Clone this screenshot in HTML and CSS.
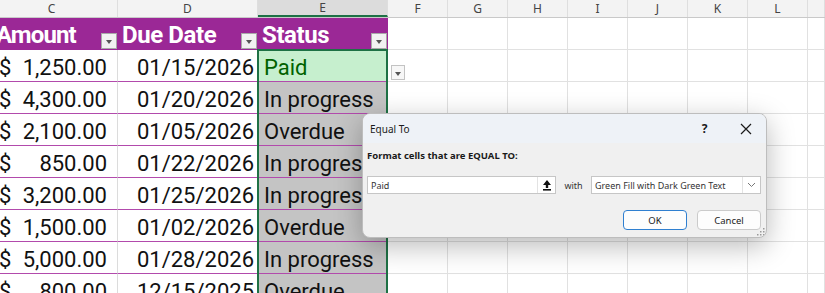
FILE: index.html
```html
<!DOCTYPE html>
<html>
<head>
  <link rel="stylesheet" href="styles.css">
  <title>Invoices - Conditional Formatting</title>
</head>
<body>
  <div class="view">
    <div class="sheet">
      <div class="row letters">
        <div class="cl">C</div><div class="cl">D</div><div class="cl sel">E</div>
        <div class="cl">F</div><div class="cl">G</div><div class="cl">H</div><div class="cl">I</div>
        <div class="cl">J</div><div class="cl">K</div><div class="cl">L</div><div class="cl"></div>
      </div>

      <div class="row">
        <div class="th first"><span>Amount</span><i class="filter"></i></div>
        <div class="th"><span>Due Date</span><i class="filter"></i></div>
        <div class="th"><span>Status</span><i class="filter"></i></div>
        <div class="g"></div><div class="g"></div><div class="g"></div><div class="g"></div>
        <div class="g"></div><div class="g"></div><div class="g"></div><div class="g"></div>
      </div>

      <div class="row">
        <div class="amt"><span>$</span><span>1,250.00</span></div>
        <div class="date">01/15/2026</div>
        <div class="st paid">Paid</div>
        <div class="g"></div><div class="g"></div><div class="g"></div><div class="g"></div>
        <div class="g"></div><div class="g"></div><div class="g"></div><div class="g"></div>
      </div>

      <div class="row">
        <div class="amt"><span>$</span><span>4,300.00</span></div>
        <div class="date">01/20/2026</div>
        <div class="st">In progress</div>
        <div class="g"></div><div class="g"></div><div class="g"></div><div class="g"></div>
        <div class="g"></div><div class="g"></div><div class="g"></div><div class="g"></div>
      </div>

      <div class="row">
        <div class="amt"><span>$</span><span>2,100.00</span></div>
        <div class="date">01/05/2026</div>
        <div class="st">Overdue</div>
        <div class="g"></div><div class="g"></div><div class="g"></div><div class="g"></div>
        <div class="g"></div><div class="g"></div><div class="g"></div><div class="g"></div>
      </div>

      <div class="row">
        <div class="amt"><span>$</span><span>850.00</span></div>
        <div class="date">01/22/2026</div>
        <div class="st">In progress</div>
        <div class="g"></div><div class="g"></div><div class="g"></div><div class="g"></div>
        <div class="g"></div><div class="g"></div><div class="g"></div><div class="g"></div>
      </div>

      <div class="row">
        <div class="amt"><span>$</span><span>3,200.00</span></div>
        <div class="date">01/25/2026</div>
        <div class="st">In progress</div>
        <div class="g"></div><div class="g"></div><div class="g"></div><div class="g"></div>
        <div class="g"></div><div class="g"></div><div class="g"></div><div class="g"></div>
      </div>

      <div class="row">
        <div class="amt"><span>$</span><span>1,500.00</span></div>
        <div class="date">01/02/2026</div>
        <div class="st">Overdue</div>
        <div class="g"></div><div class="g"></div><div class="g"></div><div class="g"></div>
        <div class="g"></div><div class="g"></div><div class="g"></div><div class="g"></div>
      </div>

      <div class="row">
        <div class="amt"><span>$</span><span>5,000.00</span></div>
        <div class="date">01/28/2026</div>
        <div class="st">In progress</div>
        <div class="g"></div><div class="g"></div><div class="g"></div><div class="g"></div>
        <div class="g"></div><div class="g"></div><div class="g"></div><div class="g"></div>
      </div>

      <div class="row">
        <div class="amt"><span>$</span><span>800.00</span></div>
        <div class="date">12/15/2025</div>
        <div class="st">Overdue</div>
        <div class="g"></div><div class="g"></div><div class="g"></div><div class="g"></div>
        <div class="g"></div><div class="g"></div><div class="g"></div><div class="g"></div>
      </div>
    </div>

    <!-- selected range E3:E10 -->
    <div class="selection"></div>
    <i class="filter stray"></i>

    <div class="dialog">
      <div class="dlg-title">
        <span class="dlg-name">Equal To</span>
        <span class="tbtn">?</span>
        <span class="tbtn close">
          <svg width="12" height="12" viewBox="0 0 12 12"><path d="M1 1L11 11M11 1L1 11" stroke="#1a1a1a" stroke-width="1.2" fill="none"/></svg>
        </span>
      </div>
      <div class="dlg-body">
        <div class="dlg-label">Format cells that are EQUAL TO:</div>
        <div class="dlg-row">
          <div class="field">
            <span class="field-text">Paid</span>
            <span class="ref-btn">
              <svg width="10" height="12" viewBox="0 0 10 12"><path d="M5 1L9 6H6.2V9H3.8V6H1Z" fill="#111"/><rect x="1" y="10" width="8" height="1.6" fill="#111"/></svg>
            </span>
          </div>
          <span class="with">with</span>
          <div class="combo">
            <span class="field-text">Green Fill with Dark Green Text</span>
            <span class="chev">
              <svg width="9" height="6" viewBox="0 0 9 6"><path d="M1 1L4.5 4.5L8 1" stroke="#777" stroke-width="1" fill="none"/></svg>
            </span>
          </div>
        </div>
        <div class="dlg-btns">
          <button type="button" class="btn primary">OK</button>
          <button type="button" class="btn">Cancel</button>
        </div>
      </div>
      <svg class="grip" width="9" height="9" viewBox="0 0 9 9">
        <rect x="7" y="1" width="1.5" height="1.5" fill="#9a9a9a"/>
        <rect x="4" y="4" width="1.5" height="1.5" fill="#9a9a9a"/>
        <rect x="7" y="4" width="1.5" height="1.5" fill="#9a9a9a"/>
        <rect x="1" y="7" width="1.5" height="1.5" fill="#9a9a9a"/>
        <rect x="4" y="7" width="1.5" height="1.5" fill="#9a9a9a"/>
        <rect x="7" y="7" width="1.5" height="1.5" fill="#9a9a9a"/>
      </svg>
    </div>
  </div>
</body>
</html>
```

FILE: styles.css
```css
:root {
  --purple: #9b2896;
  --rowline: #b24aac;
  --grid: #e1e1e1;
  --sel: #1e7145;
  --status-gray: #c4c4c4;
}

body {
  margin: 0;
  background: #fff;
  font-family: Roboto, "Liberation Sans", sans-serif;
}

.view {
  position: relative;
  width: 825px;
  height: 293px;
  overflow: hidden;
}

/* sheet is scrolled a little to the right, so column C is cut on the left */
.sheet {
  margin-left: -14px;
}

.row {
  display: grid;
  grid-template-columns: 132px 140px 130px repeat(7, 60px) 1fr;
  height: 32px;
}

/* column letters */
.letters {
  height: 18px;
  background: #f3f3f3;
  border-bottom: 1px solid #c9c9c9;
  box-sizing: border-box;
}

.cl {
  font: 12px "Noto Sans", sans-serif;
  color: #444;
  text-align: center;
  line-height: 17px;
  border-right: 1px solid #dedede;
}

.cl.sel {
  background: #dcdcdc;
  border-bottom: 2px solid var(--sel);
  line-height: 15px;
}

/* table header */
.th {
  background: var(--purple);
  color: #fff;
  font-weight: bold;
  font-size: 24px;
  letter-spacing: -0.4px;
  display: flex;
  align-items: flex-end;
  justify-content: space-between;
  padding: 0 1px 1px 4px;
  line-height: 28px;
  overflow: hidden;
}

.th.first {
  padding-left: 10px;
}

.th.first span {
  letter-spacing: -0.9px;
}

.filter {
  display: block;
  width: 16px;
  height: 16px;
  box-sizing: border-box;
  background: #f2f2f2;
  border: 1px solid #a9a9a9;
  position: relative;
  flex: none;
}

.filter::after {
  content: "";
  position: absolute;
  left: 4px;
  top: 6px;
  border-left: 3.5px solid transparent;
  border-right: 3.5px solid transparent;
  border-top: 4px solid #555;
}

.filter.stray {
  position: absolute;
  left: 391px;
  top: 65px;
  width: 14px;
  height: 15px;
  background: #f7f7f7;
  border-color: #c3c3c3;
}

.filter.stray::after {
  left: 3px;
}

/* cells */
.amt, .date, .st {
  font-size: 22px;
  line-height: 26px;
  color: #111;
  border-bottom: 1px solid var(--rowline);
  display: flex;
  align-items: flex-end;
  white-space: nowrap;
  overflow: hidden;
}

.amt {
  justify-content: space-between;
  padding: 0 10px 0 13px;
  border-right: 1px solid #dcdcdc;
}

.date {
  justify-content: flex-end;
  padding-right: 4px;
}

.st {
  background: var(--status-gray);
  padding-left: 5px;
  margin-left: 1px;
}

.st.paid {
  background: #c6efce;
  color: #006100;
}

.g {
  border-right: 1px solid var(--grid);
  border-bottom: 1px solid var(--grid);
}

.selection {
  position: absolute;
  left: 257px;
  top: 49px;
  width: 131px;
  height: 260px;
  border: 2px solid var(--sel);
  box-sizing: border-box;
}

/* dialog */
.dialog {
  position: absolute;
  left: 362px;
  top: 113px;
  width: 405px;
  height: 125px;
  box-sizing: border-box;
  background: #f0f0f0;
  border: 1px solid #bdbdbd;
  border-radius: 8px;
  box-shadow: 0 8px 28px rgba(0, 0, 0, 0.28);
  overflow: hidden;
  font-family: "Noto Sans", sans-serif;
  font-size: 9px;
  color: #1a1a1a;
}

.dlg-title {
  height: 29px;
  background: #eef2f7;
  display: flex;
  align-items: center;
  padding-left: 7px;
  font-size: 10px;
}

.dlg-name {
  flex: 1;
}

.tbtn {
  width: 41px;
  text-align: center;
  font-size: 12px;
  font-weight: bold;
  display: flex;
  justify-content: center;
}

.dlg-body {
  padding: 0 5px 0 4px;
}

.dlg-label {
  font-weight: bold;
  font-size: 9.5px;
  margin-top: 7px;
  line-height: 12px;
}

.dlg-row {
  display: flex;
  align-items: center;
  margin-top: 14px;
  height: 18px;
}

.field, .combo {
  height: 18px;
  box-sizing: border-box;
  background: #fff;
  border: 1px solid #c6c6c6;
  display: flex;
  align-items: center;
}

.field {
  width: 189px;
}

.combo {
  width: 170px;
}

.field-text {
  flex: 1;
  padding-left: 3px;
  color: #333;
}

.ref-btn, .chev {
  width: 17px;
  height: 16px;
  border-left: 1px solid #e3e3e3;
  display: flex;
  align-items: center;
  justify-content: center;
}

.with {
  width: 35px;
  text-align: center;
  color: #333;
}

.dlg-btns {
  display: flex;
  justify-content: flex-end;
  gap: 10px;
  margin-top: 16px;
}

.btn {
  width: 64px;
  height: 20px;
  padding: 0;
  background: #fdfdfd;
  border: 1px solid #cbcbcb;
  border-radius: 4px;
  font: 9.5px "Noto Sans", sans-serif;
  color: #1a1a1a;
}

.btn.primary {
  border: 1.5px solid #2f7fd0;
}

.grip {
  position: absolute;
  right: 1px;
  bottom: 1px;
}
```
